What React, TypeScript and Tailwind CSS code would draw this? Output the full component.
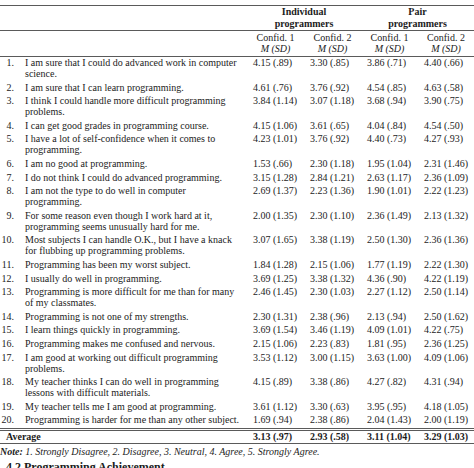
type Item = {
  n: number;
  lines: string[];
  vals: [string, string, string, string];
};

const items: Item[] = [
  { n: 1, lines: ["I am sure that I could do advanced work in computer", "science."], vals: ["4.15 (.89)", "3.30 (.85)", "3.86 (.71)", "4.40 (.66)"] },
  { n: 2, lines: ["I am sure that I can learn programming."], vals: ["4.61 (.76)", "3.76 (.92)", "4.54 (.85)", "4.63 (.58)"] },
  { n: 3, lines: ["I think I could handle more difficult programming", "problems."], vals: ["3.84 (1.14)", "3.07 (1.18)", "3.68 (.94)", "3.90 (.75)"] },
  { n: 4, lines: ["I can get good grades in programming course."], vals: ["4.15 (1.06)", "3.61 (.65)", "4.04 (.84)", "4.54 (.50)"] },
  { n: 5, lines: ["I have a lot of self-confidence when it comes to", "programming."], vals: ["4.23 (1.01)", "3.76 (.92)", "4.40 (.73)", "4.27 (.93)"] },
  { n: 6, lines: ["I am no good at programming."], vals: ["1.53 (.66)", "2.30 (1.18)", "1.95 (1.04)", "2.31 (1.46)"] },
  { n: 7, lines: ["I do not think I could do advanced programming."], vals: ["3.15 (1.28)", "2.84 (1.21)", "2.63 (1.17)", "2.36 (1.09)"] },
  { n: 8, lines: ["I am not the type to do well in computer", "programming."], vals: ["2.69 (1.37)", "2.23 (1.36)", "1.90 (1.01)", "2.22 (1.23)"] },
  { n: 9, lines: ["For some reason even though I work hard at it,", "programming seems unusually hard for me."], vals: ["2.00 (1.35)", "2.30 (1.10)", "2.36 (1.49)", "2.13 (1.32)"] },
  { n: 10, lines: ["Most subjects I can handle O.K., but I have a knack", "for flubbing up programming problems."], vals: ["3.07 (1.65)", "3.38 (1.19)", "2.50 (1.30)", "2.36 (1.36)"] },
  { n: 11, lines: ["Programming has been my worst subject."], vals: ["1.84 (1.28)", "2.15 (1.06)", "1.77 (1.19)", "2.22 (1.30)"] },
  { n: 12, lines: ["I usually do well in programming."], vals: ["3.69 (1.25)", "3.38 (1.32)", "4.36 (.90)", "4.22 (1.19)"] },
  { n: 13, lines: ["Programming is more difficult for me than for many", "of my classmates."], vals: ["2.46 (1.45)", "2.30 (1.03)", "2.27 (1.12)", "2.50 (1.14)"] },
  { n: 14, lines: ["Programming is not one of my strengths."], vals: ["2.30 (1.31)", "2.38 (.96)", "2.13 (.94)", "2.50 (1.62)"] },
  { n: 15, lines: ["I learn things quickly in programming."], vals: ["3.69 (1.54)", "3.46 (1.19)", "4.09 (1.01)", "4.22 (.75)"] },
  { n: 16, lines: ["Programming makes me confused and nervous."], vals: ["2.15 (1.06)", "2.23 (.83)", "1.81 (.95)", "2.36 (1.25)"] },
  { n: 17, lines: ["I am good at working out difficult programming", "problems."], vals: ["3.53 (1.12)", "3.00 (1.15)", "3.63 (1.00)", "4.09 (1.06)"] },
  { n: 18, lines: ["My teacher thinks I can do well in programming", "lessons with difficult materials."], vals: ["4.15 (.89)", "3.38 (.86)", "4.27 (.82)", "4.31 (.94)"] },
  { n: 19, lines: ["My teacher tells me I am good at programming."], vals: ["3.61 (1.12)", "3.30 (.63)", "3.95 (.95)", "4.18 (1.05)"] },
  { n: 20, lines: ["Programming is harder for me than any other subject."], vals: ["1.69 (.94)", "2.38 (.86)", "2.04 (1.43)", "2.00 (1.19)"] },
];

const average = ["3.13 (.97)", "2.93 (.58)", "3.11 (1.04)", "3.29 (1.03)"];

export default function App() {
  return (
    <div className="w-[474px] h-[468px] overflow-hidden bg-white text-[#1c1c1c] font-['Liberation_Serif',serif] text-[10px]">
      {/* caption, cut off by the top of the shot: only descenders show */}
      <div className="h-[5px] overflow-hidden">
        <p className="-mt-[11px] leading-[11px] whitespace-nowrap text-[#555]">
          Table 4. Mean scores of pair and individual programmers on the computer programming self-confidence items
        </p>
      </div>

      <table className="w-[474px] table-fixed border-collapse">
        <colgroup>
          <col className="w-[247px]" />
          <col className="w-[57px]" />
          <col className="w-[57px]" />
          <col className="w-[57px]" />
          <col className="w-[56px]" />
        </colgroup>
        <thead>
          <tr className="border-t border-[#5a5a5a]">
            <th />
            <th colSpan={2} className="h-[24px] p-0 text-center font-bold leading-[12px] align-top">
              Individual
              <br />
              programmers
            </th>
            <th colSpan={2} className="h-[24px] p-0 text-center font-bold leading-[12px] align-top">
              Pair
              <br />
              programmers
            </th>
          </tr>
          <tr className="border-t border-b border-[#5a5a5a]">
            <th />
            {[1, 2, 1, 2].map((c, i) => (
              <th key={i} className="pt-[1px] pb-[2px] text-center font-normal leading-[11px] align-top">
                Confid. {c}
                <br />
                <span className="italic">M (SD)</span>
              </th>
            ))}
          </tr>
        </thead>
        <tbody>
          {items.map((it) => (
            <tr key={it.n} className="align-top">
              <td className="p-0 pb-[2.6px] leading-[11px]">
                <div className="flex">
                  <span className="w-[14px] shrink-0 text-right">{it.n}.</span>
                  <div className="pl-[11px]">
                    {it.lines.map((l) => (
                      <div key={l} className="whitespace-nowrap">
                        {l}
                      </div>
                    ))}
                  </div>
                </div>
              </td>
              {it.vals.map((v, i) => (
                <td key={i} className="p-0 pl-[6px] pb-[2.6px] leading-[11px] whitespace-nowrap">
                  {v}
                </td>
              ))}
            </tr>
          ))}
          <tr className="border-t-[3px] border-double border-b border-[#5a5a5a] font-bold">
            <td className="p-0 pl-[6px] py-[1px] leading-[10px]">Average</td>
            {average.map((v, i) => (
              <td key={i} className="p-0 pl-[6px] py-[1px] leading-[10px] whitespace-nowrap">
                {v}
              </td>
            ))}
          </tr>
        </tbody>
      </table>

      <p className="pt-[2px] leading-[11px] italic whitespace-nowrap">
        <span className="font-bold">Note:</span> 1. Strongly Disagree, 2. Disagree, 3. Neutral, 4. Agree, 5. Strongly Agree.
      </p>
      <h2 className="pl-[6px] pt-[3px] text-[12px] font-bold leading-[14px]">4.2 Programming Achievement</h2>
    </div>
  );
}
